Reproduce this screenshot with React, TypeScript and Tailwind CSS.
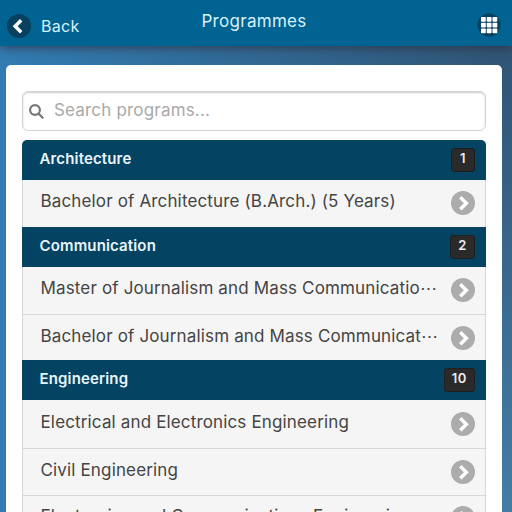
import React from "react";

interface Group {
    title:string;
    count:number;
    items:string[];
}

const groups: Group[] = [
    {
        title:"Architecture",
        count:1,
        items:["Bachelor of Architecture (B.Arch.) (5 Years)"],
    },
    {
        title:"Communication",
        count:2,
        items:[
            "Master of Journalism and Mass Communicatio⋯",
            "Bachelor of Journalism and Mass Communicat⋯",
        ],
    },
    {
        title:"Engineering",
        count:10,
        items:[
            "Electrical and Electronics Engineering",
            "Civil Engineering",
            "Electronics and Communications Engineeri⋯",
        ],
    },
];

const TopBar: React.FC = () => {
    return (
    <header className="relative z-10 grid h-[46px] shrink-0 grid-cols-[1fr_auto_1fr] bg-[#006392] text-[#d9f1fc] shadow-[0_1px_10px_rgba(50,35,45,0.75)]">
        <button className="mt-[14px] flex h-6 items-center gap-[10px] pl-[7px] text-left">
            <svg width="24" height="24" viewBox="0 0 24 24">
                <circle cx="12" cy="12" r="12" fill="#08405f"/>
                <path d="M14.2 6.2 8.2 12.2l6 6" fill="none" stroke="#fff" strokeWidth="3.5"/>
            </svg>
            <span className="text-[16px] leading-6 tracking-[0.3px]">Back</span>
        </button>
        <h1 className="mt-[9px] -ml-[4px] text-[17px] leading-6 tracking-[0.3px]">Programmes</h1>
        <button className="mt-[13px] mr-[11px] h-6 justify-self-end">
            <svg width="24" height="24" viewBox="0 0 24 24">
                <circle cx="12" cy="12" r="11.5" fill="#08405f"/>
                {[4, 9.75, 15.5].map((y) => [4, 9.75, 15.5].map((x) => (
                    <rect key={`${x}-${y}`} x={x} y={y} width="4.8" height="4.8" rx="0.8" fill="#fff"/>
                )))}
            </svg>
        </button>
    </header>
    );
};

const ArrowIcon: React.FC = () => {
    return (
    <svg className="shrink-0" width="24" height="24" viewBox="0 0 24 24">
        <circle cx="12" cy="12" r="12" fill="#acacac"/>
        <path d="M9.3 6.2l6 6-6 6" fill="none" stroke="#fff" strokeWidth="3.5"/>
    </svg>
    );
};

export default function App() {
    return (
    <div className="flex h-[512px] w-[512px] flex-col overflow-hidden bg-[linear-gradient(to_right,#327cb2,transparent),linear-gradient(to_bottom,#305474_10%,#447da6)] font-['Inter',sans-serif]">
        <TopBar/>
        <main className="mt-[19px] mr-[10px] ml-[6px] flex-1 rounded-t-[5px] bg-white pt-[26px] pr-4 pl-4">
            <label className="flex h-10 w-full items-center rounded-[6px] border border-[#d4d4d4] bg-white pl-[6px] shadow-[inset_0_1px_2px_rgba(0,0,0,0.2)]">
                <svg width="15" height="15" viewBox="0 0 15 15" fill="none" stroke="#777" strokeWidth="2.2">
                    <circle cx="6" cy="6" r="4.9"/>
                    <path d="M9.5 9.5l4.8 4.8"/>
                </svg>
                <input
                className="-mt-[3px] ml-[10px] h-7 min-w-0 flex-1 bg-transparent text-[17px] tracking-[0.18px] outline-none placeholder:text-[#a9a9a9]"
                placeholder="Search programs..."
                />
            </label>

            <div className="mt-[9px] overflow-hidden rounded-t-[5px]">
                {groups.map((group) => (
                <section key={group.title}>
                    <div className="flex h-[39.5px] items-center justify-between bg-[#044361] pr-[11px] pl-[17.5px]">
                        <h2 className="-mt-[1px] text-[15px] font-semibold tracking-[0.15px] text-[#e8f5fb]">{group.title}</h2>
                        <span className="flex h-6 min-w-6 items-center justify-center rounded-[3px] border border-[#1f1f1f] bg-[#2b2a2b] px-[7px] pb-[3px] text-[13px] font-semibold tracking-[0.6px] text-[#ececec]">{group.count}</span>
                    </div>
                    <ul className="border-x border-[#d8d8d8] bg-[#f5f5f5]">
                        {group.items.map((item) => (
                        <li key={item} className="flex h-[47px] items-center justify-between border-b border-[#d8d8d8] pr-[10.5px] pl-[17.5px] text-[#444] first:h-[48.6px] last:h-[45.4px] last:border-b-0 only:h-[47.5px]">
                            <span className="-mt-[4px] text-[17px] leading-6 tracking-[0.15px] whitespace-nowrap">{item}</span>
                            <ArrowIcon/>
                        </li>
                        ))}
                    </ul>
                </section>
                ))}
            </div>
        </main>
    </div>
    );
}
